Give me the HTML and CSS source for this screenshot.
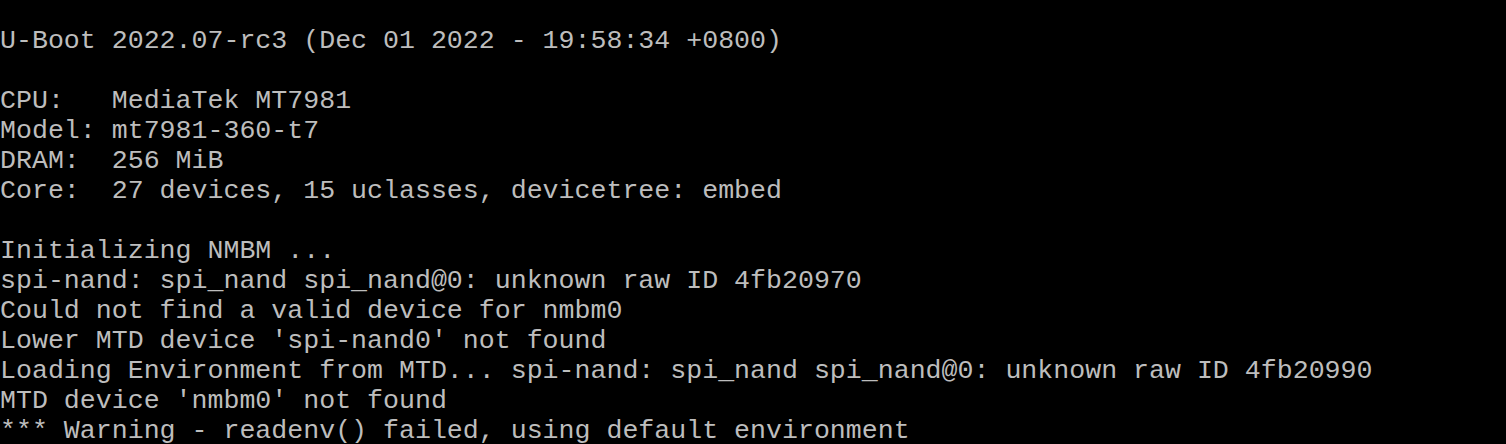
FILE: index.html
```html
<!DOCTYPE html>
<html>
<head>
<meta charset="utf-8">
<link rel="stylesheet" href="styles.css">
</head>
<body>
<pre class="term">U-Boot 2022.07-rc3 (Dec 01 2022 - 19:58:34 +0800)

CPU:   MediaTek MT7981
Model: mt7981-360-t7
DRAM:  256 MiB
Core:  27 devices, 15 uclasses, devicetree: embed

Initializing NMBM ...
spi-nand: spi_nand spi_nand@0: unknown raw ID 4fb20970
Could not find a valid device for nmbm0
Lower MTD device 'spi-nand0' not found
Loading Environment from MTD... spi-nand: spi_nand spi_nand@0: unknown raw ID 4fb20990
MTD device 'nmbm0' not found
*** Warning - readenv() failed, using default environment</pre>
</body>
</html>
```
FILE: styles.css
```css
html, body {
  margin: 0;
  padding: 0;
  background: #000;
  overflow: hidden;
}
.term {
  margin: 0;
  padding: 26px 0 0 0;
  font-family: "Liberation Mono", "Courier New", monospace;
  font-size: 26.6px;
  line-height: 30px;
  color: #bdbdbd;
  white-space: pre;
}
```
